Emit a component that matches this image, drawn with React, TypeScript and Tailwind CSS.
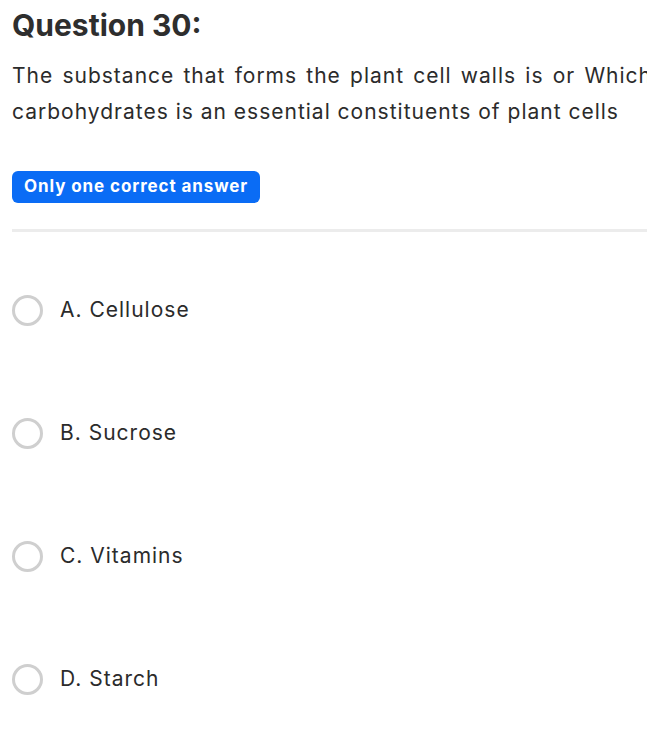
import React from "react";

const options = ["A. Cellulose", "B. Sucrose", "C. Vitamins", "D. Starch"];

export default function App() {
  return (
    <div className="w-[647px] h-[753px] overflow-hidden bg-white text-[#2b2b2b]" style={{ fontFamily: 'Inter, sans-serif' }}>
      <div className="w-[670px] pl-[12px] pt-[4px]">
        <h1 className="text-[30px] font-bold leading-[42px] text-[#2e2e2e]">Question 30:</h1>
        <p className="mt-[12px] text-[21px] leading-[36px] text-justify pr-[18px] tracking-[1px]">
          The substance that forms the plant cell walls is or Which carbohydrates is an essential constituents of plant cells
        </p>
        <div className="mt-[41px] inline-flex h-[32px] items-center rounded-[6px] bg-[#0a6cf5] px-[12px] text-[17px] font-bold tracking-[0.9px] text-white">
          Only one correct answer
        </div>
        <div className="mt-[26px] h-[3px] bg-[#ececec]" />
        <div className="mt-[62px] flex flex-col gap-[91px]">
          {options.map((o) => (
            <div key={o} className="flex h-[32px] items-center">
              <div className="h-[31px] w-[31px] rounded-full border-[3px] border-[#cfcfcf]" />
              <span className="ml-[17px] text-[21px] tracking-[1px] text-[#2b2b2b]">{o}</span>
            </div>
          ))}
        </div>
      </div>
    </div>
  );
}
